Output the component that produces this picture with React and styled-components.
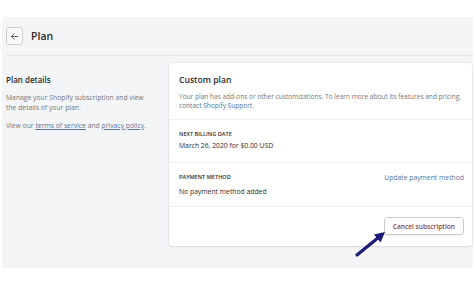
import React from 'react'
import styled, { createGlobalStyle } from 'styled-components'

const GlobalStyle = createGlobalStyle`
    html, body {
        margin: 0;
        padding: 0;
        background: #ffffff;
        font-family: "Open Sans", "Noto Sans", Arial, sans-serif;
        color: #202223;
    }
`

const Page = styled.div`
    padding: 17px 1px 0 2px;
`

const Frame = styled.div`
    position: relative;
    height: 251px;
    background: #f4f5f7;
`

const Header = styled.div`
    display: flex;
    align-items: center;
    gap: 8px;
    height: 38px;
    margin-left: 4px;
    border-bottom: 1px solid #e2e4e7;
`

const BackButton = styled.button`
    display: flex;
    align-items: center;
    justify-content: center;
    width: 17px;
    height: 18px;
    padding: 0;
    background: #f9fafb;
    border: 1px solid #c9cccf;
    border-radius: 3px;
    color: #5c5f62;
`

const Title = styled.h1`
    margin: 0;
    font-size: 10.5px;
    font-weight: 600;
    color: #2a2c2e;
`

const Body = styled.div`
    display: flex;
    padding: 7px 1px 0 4px;
`

const Aside = styled.div`
    width: 163px;
    flex-shrink: 0;
    padding-top: 11px;
`

const SideTitle = styled.h2`
    margin: 0;
    font-size: 8px;
    line-height: 12px;
    font-weight: 600;
    color: #2a2c2e;
`

const SideText = styled.p`
    max-width: 146px;
    margin: ${({ top }) => top}px 0 0;
    font-size: 6.8px;
    line-height: 10px;
    color: #74787c;
`

const Link = styled.a`
    color: #58759a;
    font-size: ${({ size }) => size || 'inherit'};
    text-decoration: ${({ underline }) => (underline ? 'underline' : 'none')};
`

const Card = styled.div`
    flex: 1;
    height: 183px;
    display: flex;
    flex-direction: column;
    background: #ffffff;
    border-radius: 3px;
    box-shadow: 0 0 0 1px rgba(63, 63, 68, 0.04), 0 1px 2px rgba(63, 63, 68, 0.12);
`

const Section = styled.div`
    padding: ${({ pad }) => pad};
    border-bottom: ${({ last }) => (last ? 'none' : '1px solid #eceef0')};
    display: ${({ end }) => (end ? 'flex' : 'block')};
    justify-content: flex-end;
`

const CardTitle = styled.h3`
    margin: 0;
    font-size: 8.6px;
    line-height: 14px;
    font-weight: 600;
    color: #2a2c2e;
`

const CardText = styled.p`
    margin: 6px 0 0;
    font-size: 6.55px;
    line-height: 8.5px;
    color: #74787c;
`

const LabelRow = styled.div`
    display: flex;
    justify-content: space-between;
    align-items: center;
    margin-bottom: ${({ gap }) => gap}px;
`

const Label = styled.span`
    font-size: 5.6px;
    line-height: 9px;
    font-weight: 600;
    color: #2a2c2e;
    text-transform: uppercase;
`

const Value = styled.div`
    font-size: 6.8px;
    line-height: 10px;
    color: #2a2c2e;
`

const Button = styled.button`
    height: 18px;
    padding: 0 8px;
    font-family: inherit;
    font-size: 6.6px;
    font-weight: 600;
    color: #8a3d47;
    background: #ffffff;
    border: 1px solid #c9cccf;
    border-radius: 3px;
    box-shadow: 0 1px 0 rgba(0, 0, 0, 0.05);
`

const Arrow = styled.svg`
    position: absolute;
    left: 350px;
    top: 210px;
`

const App = () => (
    <Page>
        <GlobalStyle />
        <Frame>
            <Header>
                <BackButton>
                    <svg width="9" height="9" viewBox="0 0 10 10">
                        <path d="M8.5 5H1.8M4.6 2L1.6 5l3 3" fill="none" stroke="#5c5f62" strokeWidth="1.1" strokeLinecap="round" strokeLinejoin="round" />
                    </svg>
                </BackButton>
                <Title>Plan</Title>
            </Header>
            <Body>
                <Aside>
                    <SideTitle>Plan details</SideTitle>
                    <SideText top={7}>Manage your Shopify subscription and view the details of your plan.</SideText>
                    <SideText top={8}>
                        View our <Link underline>terms of service</Link> and <Link underline>privacy policy</Link>.
                    </SideText>
                </Aside>
                <Card>
                    <Section pad="10px 5px 9px 10px">
                        <CardTitle>Custom plan</CardTitle>
                        <CardText>
                            Your plan has add-ons or other customizations. To learn more about its features and pricing, <Link>contact Shopify Support</Link>.
                        </CardText>
                    </Section>
                    <Section pad="10px 10px 11px">
                        <LabelRow gap={2}>
                            <Label>Next billing date</Label>
                        </LabelRow>
                        <Value>March 26, 2020 for $0.00 USD</Value>
                    </Section>
                    <Section pad="10px 8px 9px 10px">
                        <LabelRow gap={5}>
                            <Label>Payment method</Label>
                            <Link as="span" size="6.8px">Update payment method</Link>
                        </LabelRow>
                        <Value>No payment method added</Value>
                    </Section>
                    <Section pad="10px 8px 10px 10px" last end>
                        <Button>Cancel subscription</Button>
                    </Section>
                </Card>
            </Body>
            <Arrow width="40" height="36" viewBox="0 0 40 36">
                <path d="M5 28L27 10" stroke="#1b1b78" strokeWidth="3.2" strokeLinecap="round" />
                <polygon points="33,5 28.6,15.6 22,7.4" fill="#1b1b78" />
            </Arrow>
        </Frame>
    </Page>
)

export default App
